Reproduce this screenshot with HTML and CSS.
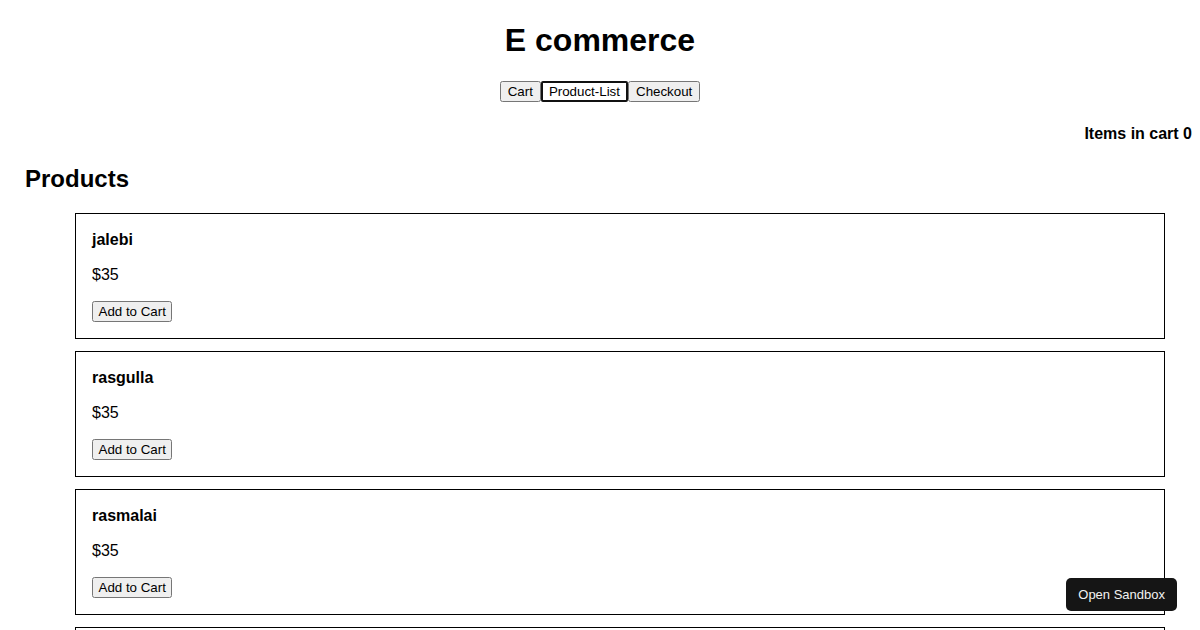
FILE: index.html
```html
<!DOCTYPE html>
<html lang="en">
<head>
<meta charset="utf-8">
<title>E commerce</title>
<link rel="stylesheet" href="styles.css">
</head>
<body>
<div class="app">
  <h1 class="title">E commerce</h1>
  <nav class="nav"><button class="nav-btn">Cart</button><button class="nav-btn active">Product-List</button><button class="nav-btn">Checkout</button></nav>
  <h4 class="cart-count">Items in cart 0</h4>
  <section class="products">
    <h2 class="products-title">Products</h2>
    <ul class="product-list">
      <li class="card">
        <h4 class="card-name">jalebi</h4>
        <p class="card-price">$35</p>
        <button class="add-btn">Add to Cart</button>
      </li>
      <li class="card">
        <h4 class="card-name">rasgulla</h4>
        <p class="card-price">$35</p>
        <button class="add-btn">Add to Cart</button>
      </li>
      <li class="card">
        <h4 class="card-name">rasmalai</h4>
        <p class="card-price">$35</p>
        <button class="add-btn">Add to Cart</button>
      </li>
      <li class="card">
        <h4 class="card-name">gulab jamun</h4>
        <p class="card-price">$35</p>
        <button class="add-btn">Add to Cart</button>
      </li>
    </ul>
  </section>
</div>
<button class="sandbox-btn">Open Sandbox</button>
</body>
</html>
```

FILE: styles.css
```css
html, body {
  background: #ffffff;
}
body {
  margin: 0;
  font-family: "Liberation Sans", Arial, sans-serif;
  color: #000000;
}
button {
  font-family: "Liberation Sans", Arial, sans-serif;
}
.app {
  padding: 0 8px;
}
.title {
  text-align: center;
  font-size: 32px;
  margin: 22px 0 21.44px;
}
.nav {
  text-align: center;
  height: 23px;
  padding-top: 1px;
}
.nav-btn {
  font-size: 13.333px;
  vertical-align: top;
}
.nav-btn.active {
  background: #ffffff;
  border: 2px solid #111111;
  border-radius: 2px;
}
.cart-count {
  text-align: right;
  font-size: 16px;
  margin: 21px 0 0;
}
.products {
  padding: 0 15px;
}
.products-title {
  font-size: 24px;
  margin: 22px 0 19.5px 2px;
}
.product-list {
  list-style: none;
  margin: 0;
  padding: 0 0 0 40px;
  display: flex;
  flex-direction: column;
  gap: 12px;
}
.card {
  margin: 0 12px;
  border: 1px solid #000000;
  padding: 17px 16px 16px;
  display: flex;
  flex-direction: column;
  align-items: flex-start;
}
.card-name {
  margin: 0;
  font-size: 16px;
}
.card-price {
  margin: 17px 0;
  font-size: 16px;
}
.add-btn {
  font-size: 13.333px;
  padding: 1px 4.5px;
}
.sandbox-btn {
  position: fixed;
  right: 23px;
  bottom: 19px;
  height: 33px;
  padding: 0 12px;
  background: #151515;
  color: #f2f2f2;
  border: none;
  border-radius: 5px;
  font-size: 13px;
}
```
